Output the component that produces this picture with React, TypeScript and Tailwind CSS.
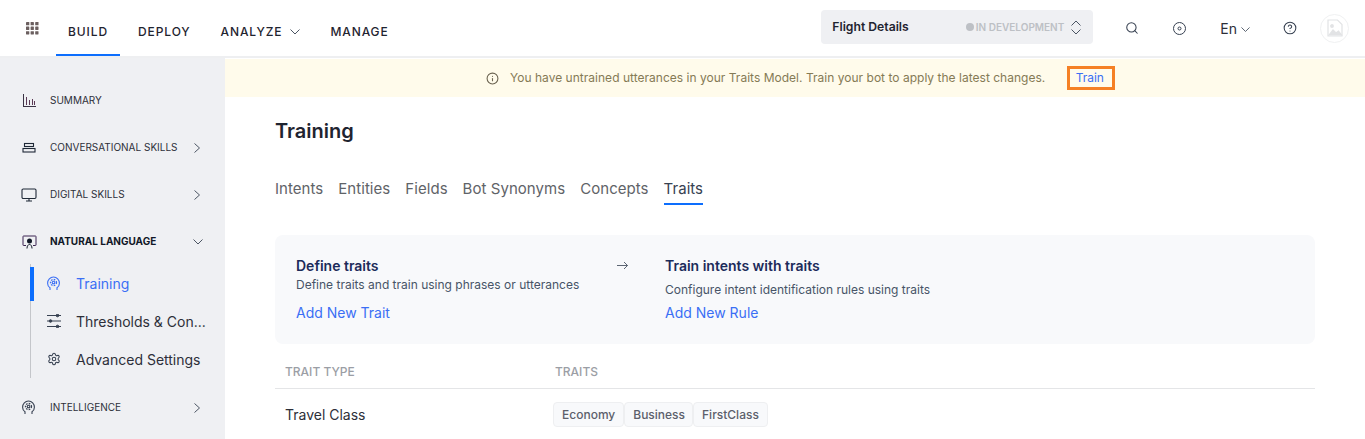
import { type FC, type ReactNode } from "react";
import { HelpCircle, Info, Search, Settings } from "lucide-react";

const GridIcon: FC = () => (
  <svg width="13" height="13" viewBox="0 0 13 13" fill="#6b5f5f">
    {[0, 4.6, 9.2].map((y) =>
      [0, 4.6, 9.2].map((x) => <rect key={`${x}-${y}`} x={x} y={y} width="3.3" height="3.3" rx="0.4" />)
    )}
  </svg>
);

const ChartIcon: FC = () => (
  <svg width="13" height="13" viewBox="0 0 13 13" fill="none" stroke="#3b3344" strokeWidth="1" shapeRendering="crispEdges" className="ml-px">
    <path d="M0.5 0v12.500H13" />
    <path d="M3.500 3v8M6.500 6v5M9.500 5v6M11.500 7v4" stroke="#5b3a55" />
  </svg>
);

const StackIcon: FC = () => (
  <svg width="14" height="14" viewBox="0 0 14 14" fill="none" stroke="#1f2937" strokeWidth="1.1">
    <rect x="2.500" y="2.500" width="9" height="3" />
    <rect x="1" y="7.500" width="12" height="3.500" />
  </svg>
);

const MonitorIcon: FC = () => (
  <svg width="16" height="14" viewBox="0 0 16 14" fill="none" stroke="#1f2937" strokeWidth="1.1" className="-ml-px">
    <rect x="1" y="1" width="14" height="9.500" rx="1.200" />
    <path d="M8 10.500v2.500M5 13h6" />
  </svg>
);

const NaturalIcon: FC = () => (
  <svg width="15" height="14" viewBox="0 0 15 14" fill="none" stroke="#3b2350" strokeWidth="1">
    <path d="M4 10.500H1.500a.5 .5 0 0 1-.5-.5V1.500a.5 .5 0 0 1 .5-.5h12a.5 .5 0 0 1 .5 .5V10a.5 .5 0 0 1-.5 .5H11" />
    <circle cx="7.500" cy="6" r="2.500" fill="#111827" stroke="none" />
    <path d="M5 13.500c0-2.400 1-4 2.500-4s2.500 1.600 2.500 4" stroke="#111827" />
  </svg>
);

const HeadIcon: FC<{ color: string }> = ({ color }) => (
  <svg width="13" height="15" viewBox="0 0 13 15" fill="none" stroke={color} strokeWidth="1.1">
    <path d="M3 14v-2.200C1.500 10.800 .6 9.300 .6 7.200 .6 3.700 3.200 1 6.500 1s5.900 2.700 5.900 6.200c0 2.100-.9 3.600-2.400 4.600V14" />
    <circle cx="6.500" cy="6.500" r="1.300" />
    <circle cx="6.500" cy="6.500" r="3" strokeWidth="1.300" strokeDasharray="1.600 1.200" />
  </svg>
);

const SlidersIcon: FC = () => (
  <svg width="14" height="14" viewBox="0 0 14 14" fill="none" stroke="#374151" strokeWidth="1">
    <path d="M0 1.500h14M0 7h14M0 12.500h14" />
    <circle cx="10.500" cy="1.500" r="1.300" fill="#374151" />
    <circle cx="3.500" cy="7" r="1.300" fill="#374151" />
    <circle cx="10.500" cy="12.500" r="1.300" fill="#374151" />
  </svg>
);

const TargetIcon: FC = () => (
  <svg width="13" height="13" viewBox="0 0 13 13" fill="none" stroke="#374151" strokeWidth="1">
    <circle cx="6.500" cy="6.500" r="6" />
    <circle cx="6.500" cy="6.500" r="1.500" />
  </svg>
);

const AvatarIcon: FC = () => (
  <svg width="16" height="18" viewBox="0 0 16 18" fill="none" stroke="#e2e3e5" strokeWidth="1.200">
    <path d="M1 1h9.500L15 5.500V17H1z" />
    <path d="M2 16l4-5 3 3 2.500-2 3 4z" fill="#e2e3e5" />
    <circle cx="5" cy="7" r="1.300" fill="#e2e3e5" />
  </svg>
);

const ChevronR: FC = () => (
  <svg width="6" height="10" viewBox="0 0 6 10" fill="none" stroke="#4b5563" strokeWidth="1" className="mr-[3px]">
    <path d="M.5 .5l5 4.500-5 4.500" />
  </svg>
);

const ChevronD: FC<{ className?: string; w?: number }> = ({ className, w = 10 }) => (
  <svg width={w} height={w * 0.6} viewBox="0 0 10 6" fill="none" stroke="#4b5563" strokeWidth="1" className={className}>
    <path d="M.5 .5L5 5 9.500 .5" />
  </svg>
);

const ArrowIcon: FC = () => (
  <svg width="11" height="9" viewBox="0 0 11 9" fill="none" stroke="#4b5563" strokeWidth="0.9" className="mt-[4px]">
    <path d="M0 4.500h10.500M7 1l3.500 3.500L7 8" />
  </svg>
);

interface SideItemProps {
  icon: ReactNode;
  label: string;
  bold?: boolean;
  open?: boolean;
  noChevron?: boolean;
}

const SideItem: FC<SideItemProps> = ({ icon, label, bold, open, noChevron }) => (
  <div className="h-[47px] flex items-center pl-[22px] pr-[22px]">
    <div className="w-[28px] shrink-0">{icon}</div>
    <span className={`flex-1 text-[10px] ${bold ? "font-bold text-[#111827]" : "font-normal text-[#2d2f39]"}`}>{label}</span>
    {noChevron ? null : open ? <ChevronD /> : <ChevronR />}
  </div>
);

const SubItem: FC<{ icon: ReactNode; label: string; active?: boolean }> = ({ icon, label, active }) => (
  <div className="relative h-[38px] flex items-center pl-[17px] -ml-px">
    {active && <div className="absolute left-0 top-[3px] w-1 h-[34px] bg-[#0d6efd]" />}
    <div className="w-[29px] shrink-0">{icon}</div>
    <span className={`text-[14px] whitespace-nowrap ${active ? "text-[#3b6ff5]" : "text-[#2d2f39]"}`}>{label}</span>
  </div>
);

const Sidebar: FC = () => (
  <aside className="w-[225px] shrink-0 bg-[#eff0f3] pt-[19px]">
    <SideItem icon={<ChartIcon />} label="SUMMARY" noChevron />
    <SideItem icon={<StackIcon />} label="CONVERSATIONAL SKILLS" />
    <SideItem icon={<MonitorIcon />} label="DIGITAL SKILLS" />
    <SideItem icon={<NaturalIcon />} label="NATURAL LANGUAGE" bold open />
    <div className="ml-[30px] mt-[2px] border-l border-[#c4c6ca] h-[114px]">
      <div className="-mt-[3px]">
        <SubItem icon={<HeadIcon color="#3b6ff5" />} label="Training" active />
        <SubItem icon={<SlidersIcon />} label="Thresholds & Con..." />
        <SubItem icon={<Settings size={14} strokeWidth={1.8} className="text-[#374151]" />} label="Advanced Settings" />
      </div>
    </div>
    <div className="mt-[6px]">
      <SideItem icon={<HeadIcon color="#374151" />} label="INTELLIGENCE" />
    </div>
  </aside>
);

const Header: FC = () => (
  <header className="h-[58px] shrink-0 bg-white border-b-2 border-[#eeeff1] flex items-center pl-[26px] pr-[16px]">
    <GridIcon />
    <nav className="flex ml-[17px] h-[56px] pt-[8px] text-[12px] font-medium tracking-[0.9px] text-[#1f2430]">
      <div className="relative w-[64px] px-3 mr-[6px] flex items-center">
        BUILD
        <div className="absolute left-0 right-0 bottom-0 h-[2px] bg-[#0d6efd]" />
      </div>
      <div className="px-3 mr-[6px] flex items-center">DEPLOY</div>
      <div className="px-3 mr-[6px] flex items-center">
        ANALYZE
        <ChevronD className="ml-2" />
      </div>
      <div className="px-3 flex items-center">MANAGE</div>
    </nav>
    <div className="ml-auto w-[272px] h-[34px] -mt-[2px] rounded-[4px] bg-[#eff0f3] flex items-center pl-[11px] pr-[12px]">
      <span className="text-[12.2px] font-semibold text-[#1f2430]">Flight Details</span>
      <span className="ml-auto w-2 h-2 rounded-full bg-[#bdc0c5]" />
      <span className="ml-[2px] text-[10px] font-semibold text-[#bdc0c5]">IN DEVELOPMENT</span>
      <div className="ml-[7px] flex flex-col gap-[3px]">
        <ChevronD w={10} className="rotate-180" />
        <ChevronD w={10} />
      </div>
    </div>
    <Search size={14} strokeWidth={1.8} className="ml-[32px] text-[#374151]" />
    <div className="ml-[34px]"><TargetIcon /></div>
    <span className="ml-[34px] text-[14px] text-[#2d2f39]">En</span>
    <ChevronD w={9} className="ml-[4px] mt-[4px]" />
    <HelpCircle size={14} strokeWidth={1.8} className="ml-[33px] text-[#374151]" />
    <div className="ml-[23px] w-[29px] h-[29px] rounded-full border border-[#f0f1f2] flex items-center justify-center">
      <AvatarIcon />
    </div>
  </header>
);

const Banner: FC = () => (
  <div className="h-[38px] mt-[1px] bg-[#fffbeb] flex items-center pl-[261px]">
    <Info size={13} strokeWidth={2} className="text-[#6b6350]" />
    <span className="ml-[11px] text-[12px] tracking-[0.02px] text-[#857a55]">
      You have untrained utterances in your Traits Model. Train your bot to apply the latest changes.
    </span>
    <span className="ml-[22px] w-[48px] h-[24px] pr-[3px] border-[3px] border-[#f58025] flex items-center justify-center text-[12px] text-[#3b6ff5]">
      Train
    </span>
  </div>
);

const tabs = ["Intents", "Entities", "Fields", "Bot Synonyms", "Concepts", "Traits"];

const Tabs: FC = () => (
  <div className="flex gap-[15px] mt-[29px] text-[15px] tracking-[0.05px] text-[#5f6368]">
    {tabs.map((tab) => (
      <div key={tab} className={`h-[33px] pt-[6px] ${tab === "Traits" ? "border-b-2 border-[#0d6efd] text-[#374151]" : ""}`}>
        {tab}
      </div>
    ))}
  </div>
);

const Steps: FC = () => (
  <div className="mt-[30px] w-[1040px] h-[109px] rounded-lg bg-[#f8f9fb] flex pl-[21px] pt-[22px]">
    <div className="w-[321px]">
      <h3 className="text-[14px] leading-[18px] font-semibold text-[#1c2b5a]">Define traits</h3>
      <p className="mt-[1px] text-[12px] leading-[18px] text-[#475467]">Define traits and train using phrases or utterances</p>
      <a className="block mt-[10px] text-[14px] leading-[18px] text-[#3b6ff5]">Add New Trait</a>
    </div>
    <ArrowIcon />
    <div className="ml-[37px]">
      <h3 className="text-[14px] leading-[18px] font-semibold text-[#1c2b5a]">Train intents with traits</h3>
      <p className="mt-[6px] text-[12px] leading-[18px] text-[#475467]">Configure intent identification rules using traits</p>
      <a className="block mt-[5px] text-[14px] leading-[18px] text-[#3b6ff5]">Add New Rule</a>
    </div>
  </div>
);

const traits = ["Economy", "Business", "FirstClass"];

const TraitsTable: FC = () => (
  <div className="w-[1040px]">
    <div className="h-[45px] flex items-center pt-[12px] border-b border-[#e4e5e7] text-[12px] font-medium text-[#9b9ea5]">
      <div className="w-[270px] pl-[10px]">TRAIT TYPE</div>
      <div className="pl-[10px]">TRAITS</div>
    </div>
    <div className="flex items-center h-[50px]">
      <div className="w-[278px] pl-[10px] text-[14px] text-[#2d2f39]">Travel Class</div>
      <div className="flex mt-[1px]">
        {traits.map((t) => (
          <span
            key={t}
            className={`h-[25px] flex items-center rounded-[4px] border border-[#eeeff1] bg-[#f8f9fb] text-[12px] font-medium text-[#5c5f6b] ${t === "Business" ? "pl-2 pr-[7px]" : "px-2"}`}
          >
            {t}
          </span>
        ))}
      </div>
    </div>
  </div>
);

const App: FC = () => (
  <div className="w-[1365px] h-[439px] overflow-hidden bg-white flex flex-col font-['Inter',sans-serif]">
    <Header />
    <div className="flex flex-1 min-h-0">
      <Sidebar />
      <main className="flex-1 min-w-0">
        <Banner />
        <div className="pl-[50px]">
          <h1 className="mt-[22px] text-[20px] leading-[24px] font-semibold text-[#1f2430]">Training</h1>
          <Tabs />
          <Steps />
          <TraitsTable />
        </div>
      </main>
    </div>
  </div>
);

export default App;
